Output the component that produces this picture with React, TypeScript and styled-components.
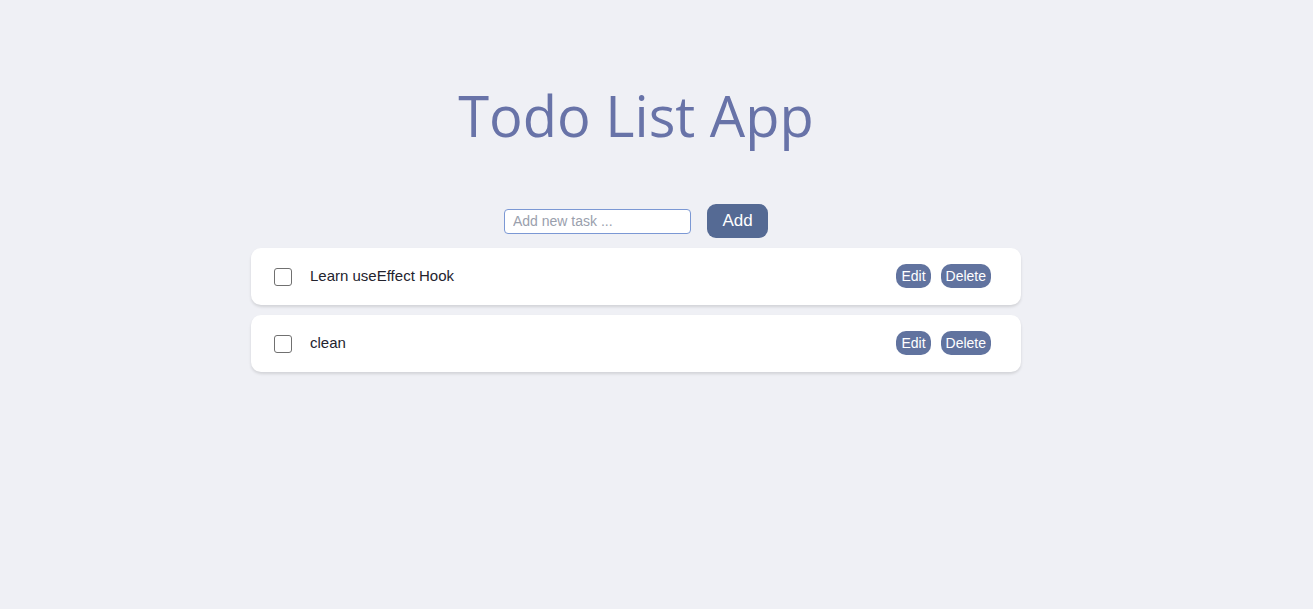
import React, { useState } from "react";
import styled, { createGlobalStyle } from "styled-components";

const GlobalStyle = createGlobalStyle`
  html, body {
    margin: 0;
    padding: 0;
    background: #eff0f5;
    font-family: "Liberation Sans", Arial, sans-serif;
  }
`;

const Page = styled.div`
  min-height: 609px;
  display: flex;
  flex-direction: column;
  align-items: center;
  padding-right: 41px;
  box-sizing: border-box;
`;

const Title = styled.h1`
  margin: 75px 0 0;
  height: 80px;
  line-height: 80px;
  font-family: "Open Sans", "DejaVu Sans", sans-serif;
  font-weight: 400;
  font-size: 56px;
  color: #6873a8;
`;

const Form = styled.form`
  margin-top: 49px;
  display: flex;
  align-items: center;
  gap: 16px;
`;

const Input = styled.input`
  width: 187px;
  height: 25px;
  box-sizing: border-box;
  border: 1px solid #7b98d4;
  border-radius: 4px;
  padding: 0 8px;
  font-family: "Liberation Sans", Arial, sans-serif;
  font-size: 14px;
  color: #333;
  background: #fff;
  outline: none;

  &::placeholder {
    color: #9aa0ad;
  }
`;

const AddButton = styled.button`
  width: 61px;
  height: 34px;
  border: none;
  border-radius: 9px;
  background: #556a94;
  color: #fff;
  font-family: "Liberation Sans", Arial, sans-serif;
  font-size: 17px;
  cursor: pointer;
`;

const List = styled.div`
  margin-top: 10px;
  width: 770px;
  display: flex;
  flex-direction: column;
  gap: 10px;
`;

const Card = styled.div`
  height: 57px;
  box-sizing: border-box;
  background: #fff;
  border-radius: 10px;
  box-shadow: 0 2px 3px rgba(0, 0, 0, 0.12);
  display: flex;
  align-items: center;
  padding: 0 30px 2px 23px;
`;

const Check = styled.span<{ $done: boolean }>`
  width: 18px;
  height: 18px;
  margin-top: 2px;
  box-sizing: border-box;
  border: 1.5px solid #707070;
  border-radius: 3px;
  background: ${(p) => (p.$done ? "#556a94" : "#fff")};
  flex-shrink: 0;
  cursor: pointer;
`;

const Text = styled.span<{ $done: boolean }>`
  margin-left: 18px;
  flex: 1;
  font-size: 15px;
  color: #23232e;
  text-decoration: ${(p) => (p.$done ? "line-through" : "none")};
`;

const SmallButton = styled.button`
  height: 24px;
  border: none;
  border-radius: 10px;
  background: #61739f;
  color: #fff;
  padding: 0 5px;
  margin-left: 10px;
  font-family: "Liberation Sans", Arial, sans-serif;
  font-size: 14px;
  cursor: pointer;
`;

type Todo = { id: number; text: string; done: boolean };

export default function App() {
  const [todos, setTodos] = useState<Todo[]>([
    { id: 1, text: "Learn useEffect Hook", done: false },
    { id: 2, text: "clean", done: false },
  ]);
  const [value, setValue] = useState("");

  const add = (e: React.FormEvent) => {
    e.preventDefault();
    if (!value.trim()) return;
    setTodos([...todos, { id: Date.now(), text: value, done: false }]);
    setValue("");
  };

  return (
    <Page>
      <GlobalStyle />
      <Title>Todo List App</Title>
      <Form onSubmit={add}>
        <Input
          placeholder="Add new task ..."
          value={value}
          onChange={(e) => setValue(e.target.value)}
        />
        <AddButton type="submit">Add</AddButton>
      </Form>
      <List>
        {todos.map((t) => (
          <Card key={t.id}>
            <Check
              $done={t.done}
              onClick={() =>
                setTodos(todos.map((x) => (x.id === t.id ? { ...x, done: !x.done } : x)))
              }
            />
            <Text $done={t.done}>{t.text}</Text>
            <SmallButton>Edit</SmallButton>
            <SmallButton onClick={() => setTodos(todos.filter((x) => x.id !== t.id))}>
              Delete
            </SmallButton>
          </Card>
        ))}
      </List>
    </Page>
  );
}
